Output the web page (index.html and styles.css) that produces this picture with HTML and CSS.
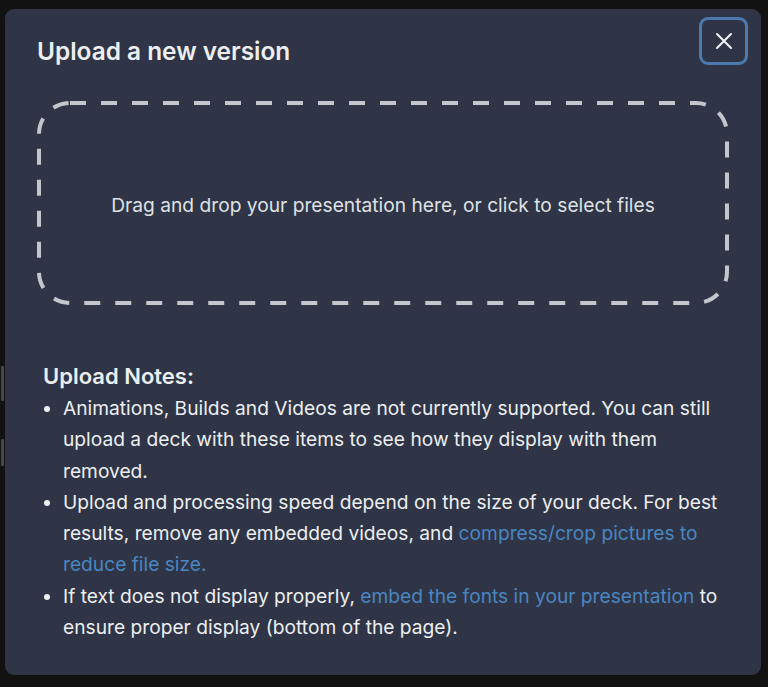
FILE: index.html
```html
<!DOCTYPE html>
<html lang="en">
<head>
    <meta charset="UTF-8">
    <meta name="viewport" content="width=device-width, initial-scale=1.0">
    <title>Upload a new version</title>
    <link rel="stylesheet" href="styles.css">
</head>
<body>
    <div class="backdrop-edge edge-1"></div>
    <div class="backdrop-edge edge-2"></div>

    <div class="modal">
        <h2 class="modal-title">Upload a new version</h2>

        <button class="close-btn" aria-label="Close">
            <svg width="18" height="18" viewBox="0 0 18 18">
                <path d="M2 2 L16 16 M16 2 L2 16" stroke="#f2f2f4" stroke-width="2" stroke-linecap="round"/>
            </svg>
        </button>

        <div class="dropzone">
            <svg class="dropzone-border" width="692" height="204" viewBox="0 0 692 204">
                <rect x="2" y="2" width="688" height="200" rx="31" ry="31"
                      fill="none" stroke="#c3c6cc" stroke-width="4" stroke-dasharray="16 15"/>
            </svg>
            <p>Drag and drop your presentation here, or click to select files</p>
        </div>

        <div class="notes">
            <h3>Upload Notes:</h3>
            <ul>
                <li>Animations, Builds and Videos are not currently supported. You can still upload a deck with these items to see how they display with them removed.</li>
                <li>Upload and processing speed depend on the size of your deck. For best results, remove any embedded videos, and <a href="#">compress/crop pictures to reduce file size.</a></li>
                <li>If text does not display properly, <a href="#">embed the fonts in your presentation</a> to ensure proper display (bottom of the page).</li>
            </ul>
        </div>
    </div>
</body>
</html>
```

FILE: styles.css
```css
:root {
    --page-bg: #121212;
    --modal-bg: #2f3546;
    --text: #eceef0;
    --muted: #dfe1e4;
    --link: #4a86c2;
    --focus: #4b79b0;
}

html, body {
    height: 100%;
}

body {
    margin: 0;
    padding: 9px 7px 12px 5px;
    box-sizing: border-box;
    background: var(--page-bg);
    font-family: Inter, 'Noto Sans', sans-serif;
    color: var(--text);
}

.backdrop-edge {
    position: absolute;
    left: 1px;
    width: 3px;
    background: #474849;
    border-radius: 1px;
}

.edge-1 {
    top: 366px;
    height: 35px;
}

.edge-2 {
    top: 439px;
    height: 27px;
}

.modal {
    position: relative;
    height: 100%;
    box-sizing: border-box;
    background: var(--modal-bg);
    border-radius: 9px;
    padding: 26px 32px 24px;
}

.modal-title {
    margin: 0;
    font-size: 24.4px;
    line-height: 32px;
    font-weight: 600;
}

.close-btn {
    position: absolute;
    top: 8px;
    right: 13px;
    width: 49px;
    height: 48px;
    display: flex;
    align-items: center;
    justify-content: center;
    background: transparent;
    border: 3px solid var(--focus);
    border-radius: 9px;
    padding: 0;
    cursor: pointer;
}

.dropzone {
    position: relative;
    margin-top: 34px;
    height: 204px;
    display: flex;
    align-items: center;
    justify-content: center;
}

.dropzone-border {
    position: absolute;
    top: 0;
    left: 0;
}

.dropzone p {
    margin: 0;
    padding-top: 4px;
    font-size: 19.2px;
    color: var(--muted);
}

.notes {
    margin-top: 56px;
    padding-left: 6px;
}

.notes h3 {
    margin: 0;
    font-size: 22px;
    line-height: 31px;
    font-weight: 600;
}

.notes ul {
    margin: 1px 0 0;
    padding-left: 20px;
}

.notes li {
    font-size: 19.2px;
    line-height: 31.3px;
}

.notes a {
    color: var(--link);
    text-decoration: none;
}
```
